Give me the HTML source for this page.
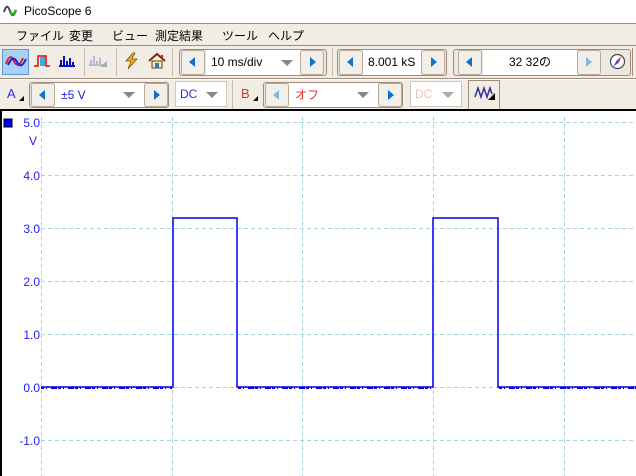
<!DOCTYPE html><html><head><meta charset="utf-8"><style>
*{margin:0;padding:0;box-sizing:border-box}
body{width:636px;height:476px;overflow:hidden;background:#fff;font-family:"Liberation Sans","Noto Sans CJK JP",sans-serif;font-size:12px;position:relative}
.a{position:absolute}
.menu{top:23px;left:0;width:636px;height:23px;background:#f1ede4;border-top:1px solid #a08c7c;border-bottom:1px solid #a08c7c}
.menu span{position:absolute;top:3px;font-size:12px;color:#000}
.tb{left:0;width:636px;background:#f1ede4}
.grp{position:absolute;border:1px solid #a08c7c;border-radius:3px;background:#ece8df}
.box{position:absolute;background:#fff;font-size:12px;line-height:24px}
.btn{position:absolute;width:24px;border:1px solid #b8a898;border-radius:3px;background:#f2efe8}
.tri{position:absolute;width:0;height:0;border-top:5px solid transparent;border-bottom:5px solid transparent}
.l{border-right:6px solid #1070d0}.r{border-left:6px solid #1070d0}
.dd{position:absolute;width:0;height:0;border-left:6px solid transparent;border-right:6px solid transparent;border-top:6px solid #888}
</style></head><body>
<svg class="a" style="left:3px;top:4px" width="16" height="14"><path d="M1 8 Q4 -2 7 7 T13 6" stroke="#444" stroke-width="2" fill="none"/><path d="M7 7 Q10 14 13 6" stroke="#2a2" stroke-width="2.5" fill="none"/></svg>
<div class="a" style="left:24px;top:4px;font-size:12px">PicoScope 6</div>
<div class="a menu"><span style="left:16px">ファイル</span><span style="left:69px">変更</span><span style="left:112px">ビュー</span><span style="left:155px">測定結果</span><span style="left:222px">ツール</span><span style="left:268px">ヘルプ</span></div>
<div class="a tb" style="top:46px;height:33px;border-bottom:1px solid #a08c7c"></div>
<div class="a tb" style="top:80px;height:29px"></div>
<!-- row1 -->
<div class="a" style="left:2px;top:49px;width:27px;height:26px;background:#a8d0f8;border:1px solid #5a9ad8"></div>
<svg class="a" style="left:5px;top:54px" width="22" height="14"><path d="M1 10 Q5 -2 9 7 T18 4" stroke="#e02020" stroke-width="2" fill="none"/><path d="M3 11 Q8 0 12 8 T21 5" stroke="#2020e0" stroke-width="2" fill="none"/></svg>
<svg class="a" style="left:33px;top:54px" width="18" height="14"><path d="M1 12 H5 V2 H13 V12 H17" stroke="#e00" stroke-width="1.5" fill="none"/><rect x="7" y="3" width="5" height="9" fill="#3ab0e0"/></svg>
<svg class="a" style="left:58px;top:53px" width="18" height="14"><path d="M1 13H17M3 13V7M6 13V3M9 13V8M12 13V5M15 13V9" stroke="#0010c0" stroke-width="2"/></svg>
<svg class="a" style="left:88px;top:53px" width="20" height="15"><path d="M1 12H17M3 12V7M6 12V3M9 12V8M12 12V5" stroke="#b8b8d8" stroke-width="2"/><path d="M12 14L19 8V14Z" fill="#aaa"/></svg>
<div class="a" style="left:116px;top:48px;width:1px;height:28px;background:#c8bcb0"></div>
<div class="a" style="left:84px;top:48px;width:1px;height:28px;background:#c8bcb0"></div>
<svg class="a" style="left:123px;top:52px" width="16" height="18"><path d="M10 1 L3 9 H8 L5 17 L14 7 H9 L12 1Z" fill="#f0b020" stroke="#805000" stroke-width="0.8"/></svg>
<svg class="a" style="left:148px;top:52px" width="18" height="17"><path d="M1 9 L9 2 L17 9" stroke="#803000" stroke-width="2" fill="none"/><rect x="4" y="9" width="10" height="7" fill="#f8e8b0" stroke="#604020"/><rect x="7" y="11" width="4" height="5" fill="#4070c0"/><rect x="13" y="3" width="2" height="4" fill="#c02020"/></svg>
<div class="a" style="left:172px;top:48px;width:1px;height:28px;background:#c8bcb0"></div>
<div class="grp" style="left:179px;top:49px;width:148px;height:27px"></div>
<div class="btn" style="left:181px;top:50px;height:25px"></div><div class="tri l" style="left:189px;top:57px"></div>
<div class="box" style="left:206px;top:50px;width:94px;height:25px;padding-left:5px">10 ms/div</div><div class="dd" style="left:281px;top:60px"></div>
<div class="btn" style="left:300px;top:50px;height:25px"></div><div class="tri r" style="left:310px;top:57px"></div>
<div class="a" style="left:332px;top:48px;width:1px;height:28px;background:#c8bcb0"></div>
<div class="grp" style="left:337px;top:49px;width:110px;height:27px"></div>
<div class="btn" style="left:339px;top:50px;height:25px"></div><div class="tri l" style="left:347px;top:57px"></div>
<div class="box" style="left:363px;top:50px;width:58px;height:25px;padding-left:5px">8.001 kS</div>
<div class="btn" style="left:421px;top:50px;height:25px"></div><div class="tri r" style="left:431px;top:57px"></div>
<div class="grp" style="left:453px;top:49px;width:178px;height:27px"></div>
<div class="btn" style="left:458px;top:50px;height:25px"></div><div class="tri l" style="left:466px;top:57px"></div>
<div class="box" style="left:483px;top:50px;width:94px;height:25px;text-align:center">32 32の</div>
<div class="btn" style="left:577px;top:50px;height:25px"></div><div class="tri r" style="left:586px;top:57px;border-left-color:#80b8e0"></div>
<svg class="a" style="left:609px;top:53px" width="17" height="17"><circle cx="8.5" cy="8.5" r="7" fill="#fff" stroke="#445" stroke-width="1.2"/><path d="M12.5 3.5 L10 9.5 L7.5 7.5Z" fill="#e03030"/><path d="M4.5 13.5 L7.5 7.5 L10 9.5Z" fill="#3050e0"/></svg>
<div class="a" style="left:632px;top:48px;width:1px;height:28px;background:#a08c7c"></div>
<!-- row2 -->
<div class="a" style="left:7px;top:86px;color:#3030e0;font-size:13px">A</div>
<div class="a" style="left:19px;top:96px;width:0;height:0;border-left:5px solid transparent;border-bottom:5px solid #000"></div>
<div class="grp" style="left:29px;top:82px;width:140px;height:26px"></div>
<div class="btn" style="left:31px;top:83px;height:24px"></div><div class="tri l" style="left:39px;top:90px"></div>
<div class="box" style="left:55px;top:83px;width:89px;height:24px;padding-left:6px;color:#2020e0">±5 V</div><div class="dd" style="left:123px;top:92px"></div>
<div class="btn" style="left:144px;top:83px;height:24px"></div><div class="tri r" style="left:154px;top:90px"></div>
<div class="box" style="left:175px;top:81px;width:52px;height:26px;border:1px solid #d0c8c0;padding-left:4px;color:#3030e0">DC</div><div class="dd" style="left:206px;top:92px"></div>
<div class="a" style="left:232px;top:80px;width:1px;height:29px;background:#c8bcb0"></div>
<div class="a" style="left:241px;top:86px;color:#e03030;font-size:13px">B</div>
<div class="a" style="left:253px;top:96px;width:0;height:0;border-left:5px solid transparent;border-bottom:5px solid #000"></div>
<div class="grp" style="left:263px;top:82px;width:140px;height:26px"></div>
<div class="btn" style="left:265px;top:83px;height:24px"></div><div class="tri l" style="left:273px;top:90px;border-right-color:#80b8e0"></div>
<div class="box" style="left:289px;top:83px;width:89px;height:24px;padding-left:6px;color:#e03030">オフ</div><div class="dd" style="left:357px;top:92px"></div>
<div class="btn" style="left:378px;top:83px;height:24px"></div><div class="tri r" style="left:388px;top:90px"></div>
<div class="box" style="left:410px;top:81px;width:52px;height:26px;border:1px solid #d0c8c0;padding-left:4px;color:#f0c0c0">DC</div><div class="dd" style="left:442px;top:92px;border-top-color:#aaa"></div>
<div class="a" style="left:468px;top:80px;width:32px;height:29px;border:1px solid #a08c7c;border-bottom:none"></div>
<svg class="a" style="left:474px;top:85px" width="22" height="16"><path d="M1 12 L4 3 L7 12 L10 3 L13 12 L16 3 L18 9" stroke="#3030a0" stroke-width="1.5" fill="none"/><path d="M14 15 L21 15 L21 8Z" fill="#000"/></svg>
<!-- plot -->
<div class="a" style="left:0;top:109px;width:636px;height:2px;background:#000"></div>
<div class="a" style="left:0;top:109px;width:2px;height:367px;background:#000"></div>
<svg class="a" style="left:0;top:0" width="636" height="476">
<rect x="4" y="119" width="8" height="8" fill="#0000ff" stroke="#000"/>
<g stroke="#a8d4e0" stroke-width="1" stroke-dasharray="4,3">
<path d="M41.5 117V476M172.5 117V476M302.5 117V476M433.5 117V476M564.5 117V476"/>
<path d="M41 122.5H636M41 175.5H636M41 228.5H636M41 281.5H636M41 334.5H636M41 387.5H636M41 440.5H636"/>
</g>
<g fill="#2020ff" font-size="12" font-family="Liberation Sans,sans-serif" text-anchor="end">
<text x="40" y="127">5.0</text><text x="37" y="145">V</text><text x="40" y="180">4.0</text><text x="40" y="233">3.0</text><text x="40" y="286">2.0</text><text x="40" y="339">1.0</text><text x="40" y="392">0.0</text><text x="40" y="445">-1.0</text></g>
<path d="M41 387 H173 V218 H237 V387 H433 V218 H498 V387 H636" stroke="#0000ee" stroke-width="1.5" fill="none"/>
<path d="M41 388H172M238 388H432M499 388H636" stroke="#0000ee" stroke-width="2" stroke-dasharray="3,2,1,4,6,1" fill="none"/>
</svg>
</body></html>
